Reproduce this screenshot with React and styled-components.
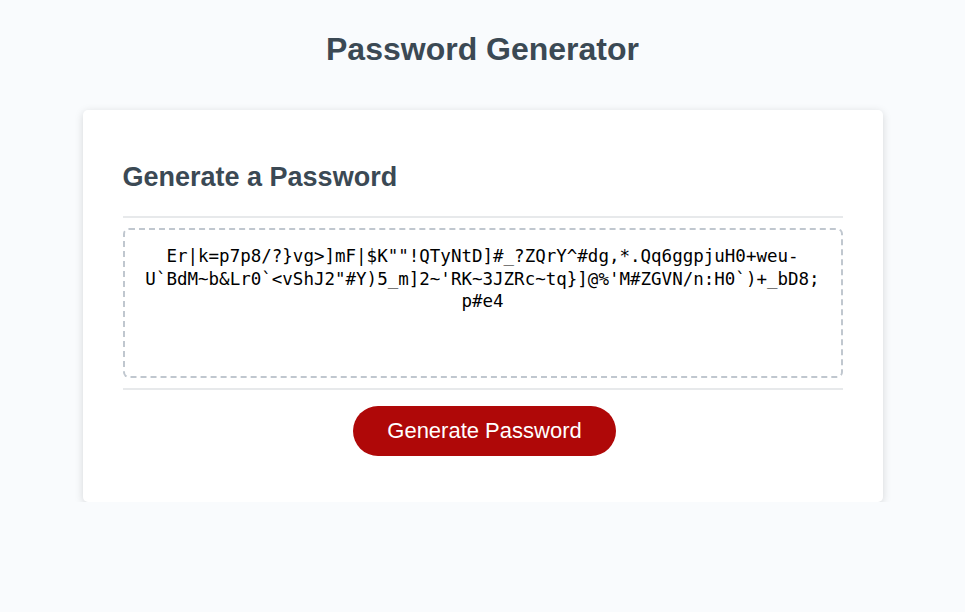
import React from "react";
import styled, { createGlobalStyle } from "styled-components";

const GlobalStyle = createGlobalStyle`
  body {
    margin: 0;
    background-color: #f9fbfd;
    font-family: "Liberation Sans", Arial, sans-serif;
  }
`;

const Header = styled.header`
  padding: 31px 0 42px;
  text-align: center;
`;

const Title = styled.h1`
  margin: 0;
  font-size: 32px;
  line-height: 37px;
  font-weight: 700;
  color: #3b4954;
`;

const Card = styled.section`
  box-sizing: border-box;
  width: 800px;
  margin: 0 auto;
  padding: 30px 40px;
  background-color: #ffffff;
  border-radius: 5px;
  box-shadow: rgba(0, 0, 0, 0.15) 0px 2px 8px 0px;
  color: #3b4954;
`;

const CardHeader = styled.div`
  border-bottom: 2px solid #e7e9eb;
`;

const CardTitle = styled.h2`
  margin: 22px 0 23px;
  font-size: 27px;
  line-height: 31px;
  font-weight: 700;
`;

const CardBody = styled.div`
  padding: 10px 0;
`;

const PasswordBox = styled.textarea`
  display: block;
  box-sizing: border-box;
  width: 100%;
  height: 150px;
  margin: 0;
  padding: 15px;
  border: 2px dashed #c0c7cf;
  border-radius: 6px;
  background: #ffffff;
  color: #000000;
  font-family: "DejaVu Sans Mono", "Liberation Mono", monospace;
  font-size: 17.5px;
  line-height: 22.5px;
  text-align: center;
  white-space: pre;
  resize: none;
  overflow: hidden;
  outline: none;
`;

const CardFooter = styled.div`
  border-top: 2px solid #e7e9eb;
  text-align: center;
`;

const Button = styled.button`
  display: inline-block;
  margin: 16px 16px 16px 20px;
  padding: 14px 34px;
  border: none;
  border-radius: 25px;
  background-color: #af0808;
  color: #ffffff;
  font-family: "Liberation Sans", Arial, sans-serif;
  font-size: 22px;
  line-height: 22px;
  cursor: pointer;
`;

const password = [
  "Er|k=p7p8/?}vg>]mF|$K\"\"!QTyNtD]#_?ZQrY^#dg,*.Qq6ggpjuH0+weu-",
  "U`BdM~b&Lr0`<vShJ2\"#Y)5_m]2~'RK~3JZRc~tq}]@%'M#ZGVN/n:H0`)+_bD8;",
  "p#e4",
].join("\n");

export default function App() {
  return (
    <>
      <GlobalStyle />
      <Header>
        <Title>Password Generator</Title>
      </Header>
      <Card>
        <CardHeader>
          <CardTitle>Generate a Password</CardTitle>
        </CardHeader>
        <CardBody>
          <PasswordBox readOnly value={password} aria-label="Generated Password" />
        </CardBody>
        <CardFooter>
          <Button type="button">Generate Password</Button>
        </CardFooter>
      </Card>
    </>
  );
}
